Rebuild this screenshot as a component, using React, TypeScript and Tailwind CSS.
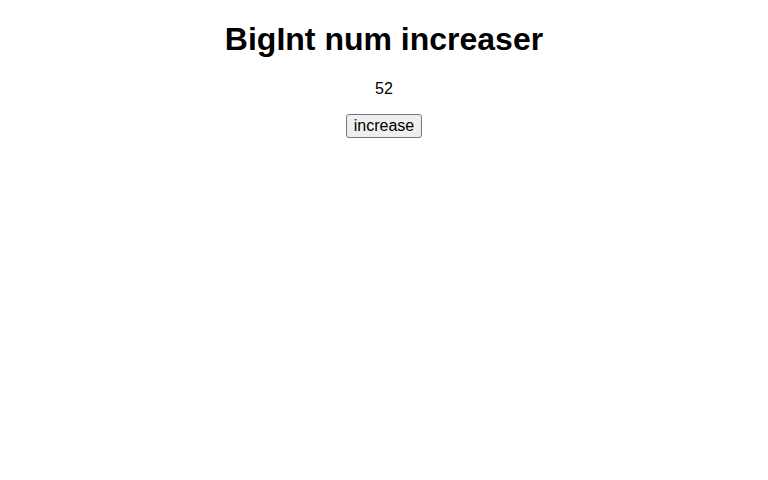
import React, { useState } from 'react';

function App() {
  const [num, setNum] = useState<bigint>(52n);

  return (
    <div className="flex flex-col items-center bg-white text-black font-['Liberation_Sans',Arial,sans-serif]">
      <h1 className="mt-[21px] mb-[22px] text-[32px] leading-[37px] font-bold">BigInt num increaser</h1>
      <p className="text-base leading-[18px]">{num.toString()}</p>
      <button
        className="mt-4 px-[7px] py-[2px] text-base leading-[18px] bg-[#efefef] border border-[#767676] rounded-[3px] hover:bg-[#e5e5e5]"
        onClick={() => setNum((n) => n + 1n)}
      >
        increase
      </button>
    </div>
  );
}

export default App;
